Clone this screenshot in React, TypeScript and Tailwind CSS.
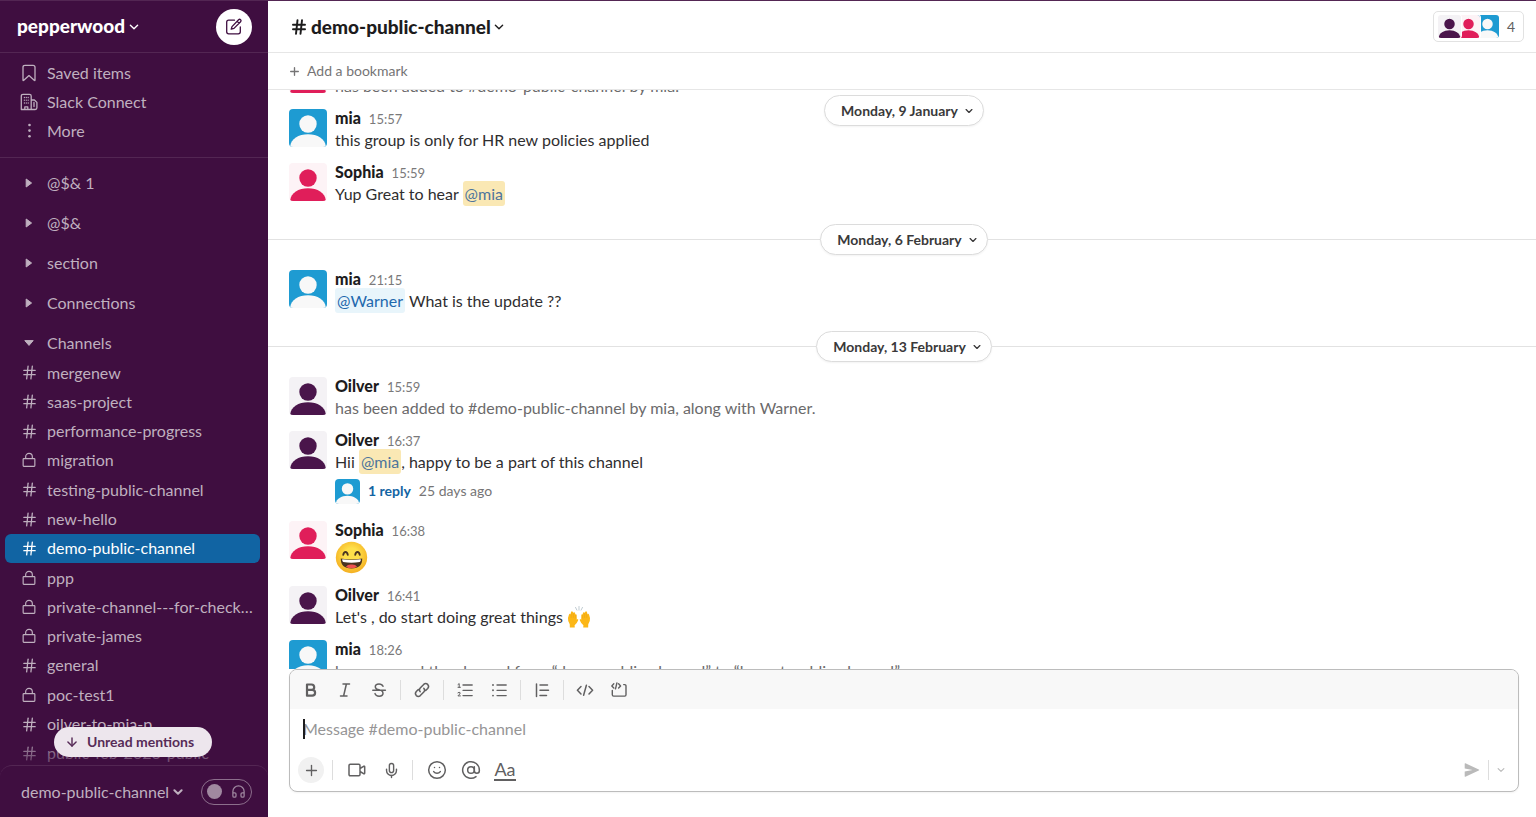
import { useState, type ReactNode } from "react";
import { ArrowDown, AtSign, Hash, Headphones, Mic, Plus, Smile } from "lucide-react";

type User = "mia" | "Sophia" | "Oilver";

type Channel = {
  name: string;
  locked?: boolean;
};

const sections = ["@$& 1", "@$&", "section", "Connections"];

const channels: Channel[] = [
  { name: "mergenew" },
  { name: "saas-project" },
  { name: "performance-progress" },
  { name: "migration", locked: true },
  { name: "testing-public-channel" },
  { name: "new-hello" },
  { name: "demo-public-channel" },
  { name: "ppp", locked: true },
  { name: "private-channel---for-checking", locked: true },
  { name: "private-james", locked: true },
  { name: "general" },
  { name: "poc-test1", locked: true },
  { name: "oilver-to-mia-p" },
  { name: "public-feb-2023-public" },
];

const avatarColors: Record<User, { bg: string; fg: string }> = {
  mia: { bg: "#1e9bd2", fg: "#f8f8f8" },
  Sophia: { bg: "#fdf3f6", fg: "#e01e5a" },
  Oilver: { bg: "#f4f2f5", fg: "#4a154b" },
};

function Avatar({ user, className }: { user: User; className: string }) {
  const { bg, fg } = avatarColors[user];

  return (
    <svg viewBox="0 0 38 38" className={`shrink-0 ${className}`} aria-hidden="true">
      <rect width="38" height="38" fill={bg} />
      <circle cx="19" cy="15" r="8.7" fill={fg} />
      <path
        d="M1.2 37.2C2 30 9.5 25.3 19 25.3S36 30 36.8 37.2q0 .8-.8.8H2q-.8 0-.8-.8Z"
        fill={fg}
      />
    </svg>
  );
}

function Chevron({ className = "size-[10px]", stroke = 1.4 }: { className?: string; stroke?: number }) {
  return (
    <svg viewBox="0 0 10 10" className={className} aria-hidden="true">
      <path
        d="m1.4 3.2 3.6 3.6 3.6-3.6"
        fill="none"
        stroke="currentColor"
        strokeWidth={stroke}
        strokeLinecap="round"
        strokeLinejoin="round"
      />
    </svg>
  );
}

function Glyph({ children, className = "size-5" }: { children: ReactNode; className?: string }) {
  return (
    <svg
      viewBox="0 0 20 20"
      className={className}
      fill="none"
      stroke="currentColor"
      strokeWidth="1.3"
      strokeLinecap="round"
      strokeLinejoin="round"
      aria-hidden="true"
    >
      {children}
    </svg>
  );
}

function LockIcon() {
  return (
    <Glyph className="size-[18px]">
      <path d="M4.3 8.4h11.4q.8 0 .8.8v7q0 .8-.8.8H4.3q-.8 0-.8-.8v-7q0-.8.8-.8Z" />
      <path d="M6.3 8.2V6.3a3.7 3.7 0 0 1 7.4 0v1.9" />
    </Glyph>
  );
}

function Caret({ open = false }: { open?: boolean }) {
  return (
    <svg viewBox="0 0 10 10" className="size-[10px]" aria-hidden="true">
      <path
        d={open ? "M.8 2.6h8.4L5 7.4Z" : "M2.2 1v8L7.600 5Z"}
        fill="currentColor"
        stroke="currentColor"
        strokeWidth="1"
        strokeLinejoin="round"
      />
    </svg>
  );
}

function SidebarRow({ icon, label }: { icon: ReactNode; label: string }) {
  return (
    <button className="flex h-full w-full items-center pl-[19px] text-left">
      <span className="flex w-5 shrink-0 justify-center">{icon}</span>
      <span className="ml-2 min-w-0 truncate pr-3">{label}</span>
    </button>
  );
}

function Sidebar() {
  const [active, setActive] = useState("demo-public-channel");

  return (
    <aside className="flex w-[268px] shrink-0 flex-col overflow-hidden bg-[#3f0e40] text-base text-[#bfb0bf]">
      <div className="flex h-[52px] shrink-0 items-center justify-between border-b border-[#532653] pl-[17px] pr-4">
        <button className="flex items-center gap-1 text-[19px] font-black text-white">
          pepperwood
          <Chevron />
        </button>
        <button
          aria-label="New message"
          className="flex size-9 items-center justify-center rounded-full bg-white text-[#3f0e40]"
        >
          <Glyph>
            <path d="M10.5 3.2H4.7q-2 0-2 2v9.6q0 2 2 2h9.6q2 0 2-2V10" />
            <path d="m8 9.6 6.6-6.8q1-1 2 0t0 2L10 11.4l-2.8.8ZM13.2 4.4l1.9 1.9" />
          </Glyph>
        </button>
      </div>

      <ul className="shrink-0 border-b border-[#532653] pb-3 pt-[5px]">
        <li className="h-[29px]">
          <SidebarRow
            label="Saved items"
            icon={
              <Glyph>
                <path d="M4 17V4.3q0-2 2-2h8q2 0 2 2V17q0 1-.8.3L10 12.6l-5.2 4.7Q4 18 4 17Z" />
              </Glyph>
            }
          />
        </li>
        <li className="h-[29px]">
          <SidebarRow
            label="Slack Connect"
            icon={
              <Glyph>
                <path d="M2.3 17.5V4q0-1.7 1.7-1.7h6.5q1.7 0 1.7 1.7v13.5ZM12.2 8h3.2l2.5 2.4v5.4q0 1.7-1.7 1.7h-4M15 10.5v4M5.8 17.5v-2.6h3v2.6" />
                <path d="M5.4 5.5h0M7.3 5.5h0M9.2 5.5h0M5.4 8.2h0M7.3 8.2h0M9.2 8.2h0M5.4 11h0M7.3 11h0M9.2 11h0" />
              </Glyph>
            }
          />
        </li>
        <li className="h-[29px]">
          <SidebarRow
            label="More"
            icon={
              <Glyph>
                <g fill="currentColor" stroke="none">
                  <circle cx="10.5" cy="4" r="1.3" />
                  <circle cx="10.5" cy="9.6" r="1.3" />
                  <circle cx="10.5" cy="15.2" r="1.3" />
                </g>
              </Glyph>
            }
          />
        </li>
      </ul>

      <nav className="relative min-h-0 flex-1 overflow-hidden pt-[10px]" aria-label="Channels">
        <ul className="flex flex-col gap-[10px]">
          {sections.map((name) => (
            <li key={name} className="h-[30px]">
              <SidebarRow label={name} icon={<Caret />} />
            </li>
          ))}
          <li className="h-[30px]">
            <SidebarRow label="Channels" icon={<Caret open />} />
          </li>
        </ul>

        <ul className="grid h-[410px] auto-rows-fr pl-[5px] pr-2">
          {channels.map(({ name, locked }) => (
            <li key={name} className="min-w-0">
              <button
                onClick={() => setActive(name)}
                className={`flex h-full w-full items-center rounded-md pl-[14px] text-left ${
                  name === active ? "bg-[#1164a3] text-white" : ""
                }`}
              >
                <span className="flex w-5 shrink-0 justify-center">
                  {locked ? <LockIcon /> : <Hash size={17} strokeWidth={1.8} />}
                </span>
                <span className="ml-2 min-w-0 truncate pr-1">{name}</span>
              </button>
            </li>
          ))}
        </ul>

        <div className="pointer-events-none absolute inset-x-0 bottom-0 h-8 bg-linear-to-t from-[#3f0e40]/70 to-transparent" />
        <button className="absolute bottom-2 left-[54px] flex h-[30px] items-center gap-2 rounded-full bg-[#ede6ed] pl-[11px] pr-[18px] text-sm font-bold text-[#572c58]">
          <ArrowDown size={14} strokeWidth={2.5} />
          Unread mentions
        </button>
      </nav>

      <div className="flex h-[52px] shrink-0 items-center justify-between rounded-t-xl border-t border-[#532653] pl-[21px] pr-4">
        <button className="flex items-center gap-1">
          demo-public-channel
          <Chevron stroke={2} />
        </button>
        <button
          aria-label="Start a huddle"
          className="flex h-[26px] w-[51px] items-center justify-between rounded-full border border-[#8c6e8c] px-[5px]"
        >
          <span className="size-[15px] rounded-full bg-[#a088a0]" />
          <Headphones size={15} className="text-[#a088a0]" />
        </button>
      </div>
    </aside>
  );
}

function DatePill({ children }: { children: ReactNode }) {
  return (
    <button className="flex h-[31px] items-center gap-[7px] rounded-full border border-[#dcdcdc] bg-white pl-4 pr-[10px] text-sm font-bold text-[#3a393a] shadow-xs">
      {children}
      <Chevron className="size-2" stroke={1.6} />
    </button>
  );
}

function DateDivider({ children }: { children: ReactNode }) {
  return (
    <div className="-mr-1 flex h-[53px] items-center pt-0.5">
      <span className="h-px flex-1 bg-[#e2e2e2]" />
      <DatePill>{children}</DatePill>
      <span className="h-px flex-1 bg-[#e2e2e2]" />
    </div>
  );
}

function Mention({ children, self = false }: { children: ReactNode; self?: boolean }) {
  return (
    <a
      href="#"
      className={`rounded-[3px] px-0.5 py-[3px] ${
        self ? "bg-[#fae8b4] text-[#4d759c]" : "bg-[#e8f5fb] text-[#1e68ad]"
      }`}
    >
      {children}
    </a>
  );
}

type MessageProps = {
  user: User;
  time: string;
  system?: boolean;
  footer?: ReactNode;
  children: ReactNode;
};

function Message({ user, time, system = false, footer, children }: MessageProps) {
  return (
    <article className="flex gap-2 pb-[7px] pl-[21px] pr-5 pt-1">
      <Avatar user={user} className="mt-px size-[38px] rounded-[4px]" />
      <div className="min-w-0 flex-1">
        <div className="flex h-[21px] items-baseline gap-2">
          <button className="text-base font-black leading-[20px]">{user}</button>
          <time className="text-[13px] leading-[20px] text-[#7a797a]">{time}</time>
        </div>
        <div className={`text-base leading-[22px] ${system ? "text-[#6b6a6b]" : "text-[#2f2e2f]"}`}>
          {children}
        </div>
        {footer}
      </div>
    </article>
  );
}

function GrinEmoji() {
  return (
    <svg viewBox="0 0 32 32" className="block size-[33px]" role="img" aria-label="grinning face">
      <defs>
        <radialGradient id="face" cx=".5" cy=".42" r=".55">
          <stop offset=".4" stopColor="#fee04a" />
          <stop offset="1" stopColor="#f5b325" />
        </radialGradient>
      </defs>
      <circle cx="16" cy="16" r="15.2" fill="url(#face)" />
      <path
        d="M8 13.4q.5-2.700 2.200-2.700t2.200 2.700M19.600 13.4q.5-2.700 2.200-2.700t2.200 2.700"
        fill="none"
        stroke="#4a3420"
        strokeWidth="1.8"
        strokeLinecap="round"
      />
      <path d="M5.6 17q10.4 2 20.8 0 .2 9.6-10.4 9.6T5.6 17Z" fill="#4a3420" />
      <path d="M7 17.6q9 1.6 18 0 .2 2-1 2.700-8 1.400-16 0-1.200-.7-1-2.700Z" fill="#fff" />
      <path d="M10.6 25q1.8-2.6 5.4-2.2 3.6-.4 5.4 2.2-2.4 1.5-5.4 1.5T10.6 25Z" fill="#ef5350" />
    </svg>
  );
}

function HandsEmoji() {
  const hand =
    "M3 23.5 2.9 20Q.6 17 1 13.2L2 9.500q.9-1.800 1.800-.2l.5-2.700q1-1.800 2 0l.6.7q1.300-1.100 1.900.5l.1 1.400q1.400-.7 1.600.8l.1 5q2-1.700 1.400.8-1.400 3.600-3.800 5.200l.2 2.500Z";

  return (
    <svg
      viewBox="0 0 26 24"
      className="inline-block h-[22px] w-6 align-bottom"
      role="img"
      aria-label="raising hands"
    >
      <path d={hand} fill="#fcb717" />
      <path d={hand} fill="#fcb717" transform="matrix(-1 0 0 1 26 0)" />
      <path d="M4.5 8v5M6.8 8v5M9 9.5v4M21.5 8v5M19.2 8v5M17 9.5v4" stroke="#e79c10" strokeWidth=".5" />
      <path d="M13 .5v4M9.2 1.5l1.5 3M16.8 1.5l-1.5 3" stroke="#b4c1c8" strokeWidth=".9" strokeLinecap="round" />
    </svg>
  );
}

function ToolButton({ label, children }: { label: string; children: ReactNode }) {
  return (
    <button type="button" aria-label={label} className="flex h-7 w-[34px] items-center justify-center">
      {children}
    </button>
  );
}

function FormatBar() {
  const separator = <span className="mx-1 h-5 w-px bg-[#dddddd]" />;

  return (
    <div className="flex h-[39px] items-center rounded-t-[7px] bg-[#f8f8f8] px-1 text-[#616061]">
      <ToolButton label="Bold">
        <Glyph>
          <path
            d="M6 4.5h4.5a2.7 2.7 0 0 1 0 5.4H6Zm0 5.4h5.2a2.9 2.9 0 0 1 0 5.8H6Z"
            strokeWidth="2.2"
          />
        </Glyph>
      </ToolButton>
      <ToolButton label="Italic">
        <Glyph>
          <path d="M8 4h6.500M5.500 16H12M11.400 4 8.600 16" strokeWidth="1.5" />
        </Glyph>
      </ToolButton>
      <ToolButton label="Strikethrough">
        <Glyph>
          <path d="M3.8 10.3h12.6M14 6.2Q13 3.9 10 3.9q-3.7 0-3.7 2.8 0 2.3 3.9 3.1M6 13.6q.8 2.6 4.1 2.6 3.9 0 3.9-2.9 0-1.7-1.6-2.6" strokeWidth="1.5" />
        </Glyph>
      </ToolButton>
      {separator}
      <ToolButton label="Link">
        <Glyph>
          <path d="M8.2 11.8q-1.8-1.9 0-3.8l3.5-3.6q2-1.8 4 0 1.8 2 0 4l-2 2.1M11.8 8.2q1.8 1.9 0 3.8l-3.5 3.6q-2 1.8-4 0-1.8-2 0-4l2-2.1" strokeWidth="1.5" />
        </Glyph>
      </ToolButton>
      {separator}
      <ToolButton label="Ordered list">
        <Glyph>
          <path d="M8 5h9.2M8 10.3h9.2M8 15.6h9.2" />
          <path d="m3 4.5 1.2-.9v3.7M3 7.3h2.4M2.9 12.8q1.4-1.2 2.3 0 .3.9-2.3 3.1h2.5" strokeWidth="1" />
        </Glyph>
      </ToolButton>
      <ToolButton label="Bulleted list">
        <Glyph>
          <path d="M8 5h9.2M8 10.3h9.2M8 15.6h9.2" />
          <path d="M4 5h0M4 10.3h0M4 15.6h0" strokeWidth="1.9" />
        </Glyph>
      </ToolButton>
      {separator}
      <ToolButton label="Blockquote">
        <Glyph>
          <path d="M4.5 4v12.5M8 5h7.5M8 10.3h8.5M8 15.6h6.5" strokeWidth="1.5" />
        </Glyph>
      </ToolButton>
      {separator}
      <ToolButton label="Code">
        <Glyph>
          <path d="m6 6.5-3.6 3.7L6 13.9M14 6.5l3.6 3.7-3.6 3.7M11.4 5.2 8.6 15.2" strokeWidth="1.5" />
        </Glyph>
      </ToolButton>
      <ToolButton label="Code block">
        <Glyph>
          <path d="M4.8 3.8 2.8 5.9l2 2.1M9.6 3.8l2 2.1-2 2.1M7.9 3 6.5 8.8M3.3 10.5v4.3q0 1.3 1.300 1.300H15.700q1.300 0 1.300-1.300V5.900q0-1.300-1.300-1.300h-1" strokeWidth="1.4" />
        </Glyph>
      </ToolButton>
    </div>
  );
}

function Composer() {
  const [draft, setDraft] = useState("");
  const separator = <span className="ml-1 mr-[7px] h-5 w-px bg-[#dddddd]" />;

  return (
    <form className="relative z-10 mb-[25px] ml-[21px] mr-[17px] shrink-0 rounded-lg border border-[#bcbcbc] bg-white shadow-xs">
      <FormatBar />
      <div className="relative h-[42px] px-[13px] pt-2">
        {draft === "" && <span className="absolute left-[13px] top-[10px] h-5 w-0.5 bg-[#1d1c1d]" />}
        <textarea
          aria-label="Message #demo-public-channel"
          rows={1}
          value={draft}
          onChange={(e) => setDraft(e.target.value)}
          placeholder="Message #demo-public-channel"
          className="block h-6 w-full resize-none overflow-hidden text-base leading-6 outline-none placeholder:text-[#969596]"
        />
      </div>
      <div className="flex h-10 items-center px-1 pb-0.5 text-[#616061]">
        <ToolButton label="Attach">
          <span className="flex size-[26px] items-center justify-center rounded-full bg-[#f1f1f1]">
            <Plus size={17} strokeWidth={1.9} />
          </span>
        </ToolButton>
        {separator}
        <ToolButton label="Record video">
          <Glyph>
            <path d="M3.2 4.2h8.6q1.2 0 1.2 1.2v9.2q0 1.2-1.2 1.2H3.2Q2 15.8 2 14.6V5.4q0-1.2 1.2-1.2ZM13 8.5l3.6-2.2q1.1-.5 1.1.6v6.2q0 1.1-1.1.6L13 11.5" strokeWidth="1.5" />
          </Glyph>
        </ToolButton>
        <ToolButton label="Record audio">
          <Mic size={17} strokeWidth={2} />
        </ToolButton>
        {separator}
        <ToolButton label="Emoji">
          <Smile size={20} strokeWidth={1.8} />
        </ToolButton>
        <ToolButton label="Mention someone">
          <AtSign size={20} strokeWidth={1.8} />
        </ToolButton>
        <ToolButton label="Hide formatting">
          <span className="border-b-2 border-current text-lg leading-[19px]">Aa</span>
        </ToolButton>
        <div className="ml-auto flex items-center pr-[9px] text-[#bababa]">
          <button type="button" aria-label="Send now">
            <svg viewBox="0 0 16 16" className="size-4" aria-hidden="true">
              <path
                d="M1.4 1.2 14.8 7.4q1 .6 0 1.2L1.4 14.8q-.7.2-.7-.6V9.4L8.6 8 .7 6.6V1.8q0-.8.7-.6Z"
                fill="currentColor"
              />
            </svg>
          </button>
          <span className="mx-2 h-5 w-px bg-[#dddddd]" />
          <button type="button" aria-label="Schedule for later">
            <Chevron className="size-2" />
          </button>
        </div>
      </div>
    </form>
  );
}

export default function App() {
  return (
    <div className="flex h-screen flex-col overflow-hidden border-t border-[#532653] bg-white font-['Lato',sans-serif] text-[#1d1c1d]">
      <div className="flex min-h-0 flex-1">
        <Sidebar />

        <main className="flex min-w-0 flex-1 flex-col">
          <header className="flex h-[52px] shrink-0 items-center justify-between border-b border-[#e6e6e6] pl-[22px] pr-3">
            <button className="flex items-center gap-[3px]">
              <Hash size={18} strokeWidth={2.6} />
              <h1 className="text-[19px] font-black leading-7">demo-public-channel</h1>
              <Chevron />
            </button>
            <button
              aria-label="View all 4 members"
              className="flex h-[31px] items-center rounded-[5px] border border-[#e2e2e2] pl-1 pr-2 text-sm text-[#616061]"
            >
              <Avatar user="Oilver" className="relative z-20 size-[23px] rounded-[3px] ring-1 ring-white" />
              <Avatar user="Sophia" className="relative z-10 -ml-1 size-[23px] rounded-[3px] ring-1 ring-white" />
              <Avatar user="mia" className="-ml-1 size-[23px] rounded-[3px]" />
              <span className="ml-2">4</span>
            </button>
          </header>

          <div className="flex h-[37px] shrink-0 items-center border-b border-[#e6e6e6] pl-5">
            <button className="flex items-center gap-1.5 text-sm text-[#757475]">
              <Plus size={13} strokeWidth={2.5} />
              Add a bookmark
            </button>
          </div>

          <section className="relative min-h-0 flex-1 overflow-hidden" aria-label="Messages">
            <div className="absolute inset-x-0 top-[5px] z-10 flex justify-center pl-1">
              <DatePill>Monday, 9 January</DatePill>
            </div>

            <div className="-mt-10">
              <Message user="Sophia" time="15:57" system>
                has been added to #demo-public-channel by mia.
              </Message>
              <Message user="mia" time="15:57">
                this group is only for HR new policies applied
              </Message>
              <Message user="Sophia" time="15:59">
                Yup Great to hear <Mention self>@mia</Mention>
              </Message>

              <DateDivider>Monday, 6 February</DateDivider>

              <Message user="mia" time="21:15">
                <Mention>@Warner</Mention> What is the update ??
              </Message>

              <DateDivider>Monday, 13 February</DateDivider>

              <Message user="Oilver" time="15:59" system>
                has been added to #demo-public-channel by mia, along with Warner.
              </Message>
              <Message
                user="Oilver"
                time="16:37"
                footer={
                  <button className="flex h-9 items-center gap-2 text-sm">
                    <Avatar user="mia" className="size-[25px] rounded-[4px]" />
                    <span className="font-bold text-[#1264a3]">1 reply</span>
                    <span className="text-[#757475]">25 days ago</span>
                  </button>
                }
              >
                Hii <Mention self>@mia</Mention>, happy to be a part of this channel
              </Message>
              <Message user="Sophia" time="16:38">
                <GrinEmoji />
              </Message>
              <Message user="Oilver" time="16:41">
                Let's , do start doing great things <HandsEmoji />
              </Message>
              <Message user="mia" time="18:26" system>
                has renamed the channel from “demo-public-channel” to “lamest-public-channel”
              </Message>
            </div>
          </section>

          <Composer />
        </main>
      </div>
    </div>
  );
}
